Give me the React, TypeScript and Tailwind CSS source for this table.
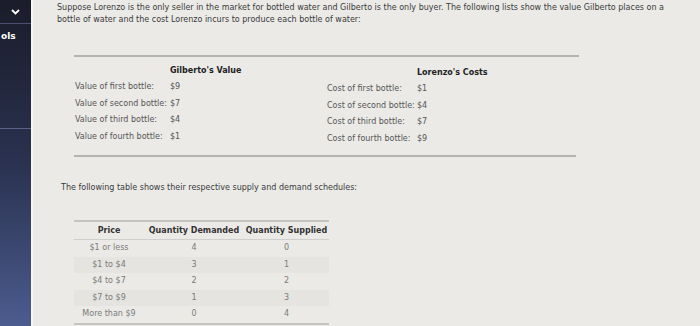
import React from "react";

const font = { fontFamily: '"DejaVu Sans", Verdana, sans-serif' };

const gilberto = [
  ["Value of first bottle:", "$9"],
  ["Value of second bottle:", "$7"],
  ["Value of third bottle:", "$4"],
  ["Value of fourth bottle:", "$1"],
];

const lorenzo = [
  ["Cost of first bottle:", "$1"],
  ["Cost of second bottle:", "$4"],
  ["Cost of third bottle:", "$7"],
  ["Cost of fourth bottle:", "$9"],
];

const schedule = [
  ["$1 or less", "4", "0"],
  ["$1 to $4", "3", "1"],
  ["$4 to $7", "2", "2"],
  ["$7 to $9", "1", "3"],
  ["More than $9", "0", "4"],
];

function ValueList({ title, rows, labelWidth }: { title: string; rows: string[][]; labelWidth: string }) {
  return (
    <div>
      <div className="flex h-[16px] items-center">
        <span className={labelWidth} />
        <span className="font-bold text-[#222]">{title}</span>
      </div>
      {rows.map(([label, val]) => (
        <div key={label} className="flex h-[16.5px] items-center text-[#555]">
          <span className={labelWidth}>{label}</span>
          <span>{val}</span>
        </div>
      ))}
    </div>
  );
}

export default function App() {
  return (
    <div className="flex h-[326px] w-[700px] overflow-hidden bg-[#ebeae7] text-[8px]" style={font}>
      {/* Sidebar */}
      <div className="flex w-[33px] shrink-0 flex-col bg-gradient-to-b from-[#1a1c2a] via-[#2a3250] to-[#4c5c8e] border-r-2 border-[#f6f6f4] overflow-hidden">
        <div className="flex h-[24px] items-center justify-center border-b border-[#4b5070]">
          <svg width="9" height="6" viewBox="0 0 9 6">
            <path d="M1 1 L4.5 4.5 L8 1" stroke="#fff" strokeWidth="1.8" fill="none" />
          </svg>
        </div>
        <div className="mt-[6px] whitespace-nowrap pl-[1px] text-[9px] font-bold leading-[12px] text-white">ols</div>
        <div className="mt-[86px] border-b border-[#5a6286]" />
      </div>

      {/* Main */}
      <div className="flex-1 text-[#3a3a3a]">
        <p className="ml-[24px] mt-[2px] w-[614px] leading-[12px]">
          Suppose Lorenzo is the only seller in the market for bottled water and Gilberto is the only buyer. The following lists show the value Gilberto places on a bottle of water and the cost Lorenzo incurs to produce each bottle of water:
        </p>

        <div className="ml-[41px] mt-[29px] h-[2px] w-[505px] bg-[#b4b4b2]" />

        <div className="ml-[42px] mt-[6px] flex">
          <div className="w-[252px]">
            <ValueList title="Gilberto's Value" rows={gilberto} labelWidth="w-[95px]" />
          </div>
          <div className="mt-[2px]">
            <ValueList title="Lorenzo's Costs" rows={lorenzo} labelWidth="w-[90px]" />
          </div>
        </div>

        <div className="ml-[41px] mt-[8px] h-[2px] w-[502px] bg-[#b4b4b2]" />

        <p className="ml-[28px] mt-[25px]">The following table shows their respective supply and demand schedules:</p>

        <div className="ml-[41px] mt-[26px] w-[255px] border-t-2 border-b-2 border-[#c4c4c2]">
          <div className="flex h-[18px] items-center border-b border-[#cfcfcd] font-bold text-[#333]">
            <span className="w-[70px] text-center">Price</span>
            <span className="w-[100px] text-center">Quantity Demanded</span>
            <span className="w-[85px] text-center">Quantity Supplied</span>
          </div>
          {schedule.map(([price, qd, qs], i) => (
            <div
              key={price}
              className={`flex h-[16.5px] items-center text-[#7a7a7a] ${i % 2 === 1 ? "bg-[#e5e4e1]" : ""}`}
            >
              <span className="w-[70px] text-center">{price}</span>
              <span className="w-[100px] text-center">{qd}</span>
              <span className="w-[85px] text-center">{qs}</span>
            </div>
          ))}
        </div>
      </div>
    </div>
  );
}
